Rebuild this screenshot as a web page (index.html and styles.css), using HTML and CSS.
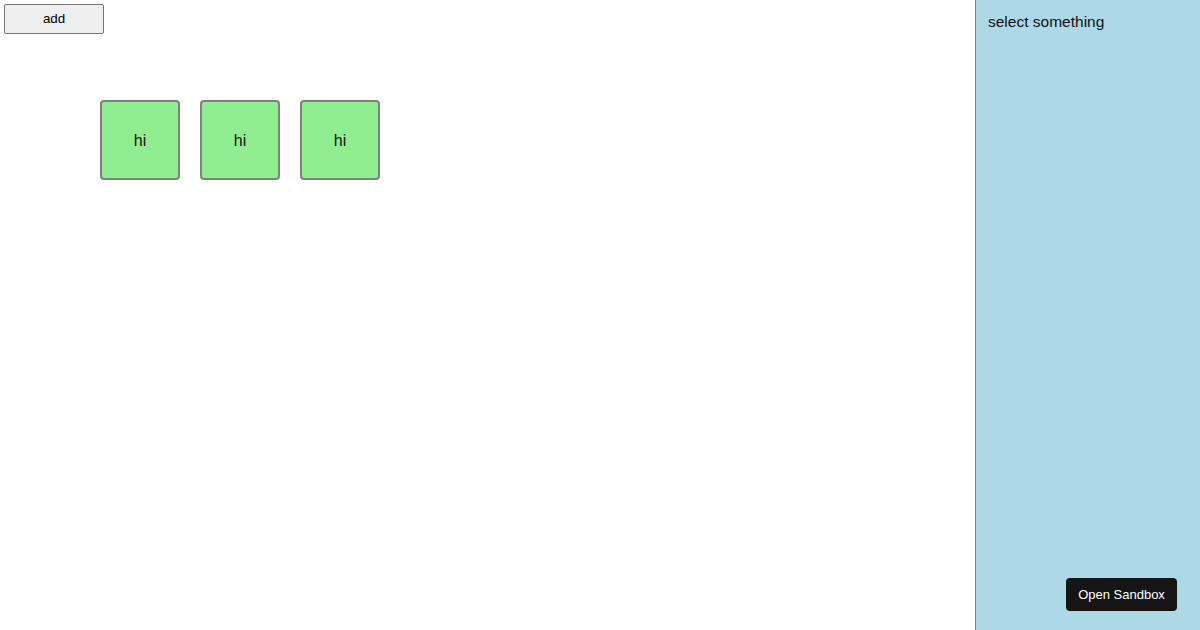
FILE: index.html
```html
<!DOCTYPE html>
<html>
<head>
<meta charset="utf-8">
<link rel="stylesheet" href="styles.css">
</head>
<body>
<div class="app">
  <main class="canvas">
    <button class="add-btn">add</button>
    <div class="nodes">
      <div class="node">hi</div>
      <div class="node">hi</div>
      <div class="node">hi</div>
    </div>
  </main>
  <aside class="panel">select something</aside>
</div>
<a class="sandbox-btn">Open Sandbox</a>
</body>
</html>
```
FILE: styles.css
```css
html, body {
  margin: 0;
  padding: 0;
  height: 100%;
  font-family: "Liberation Sans", Arial, sans-serif;
  color: #111;
}
.app {
  display: flex;
  height: 630px;
}
.canvas {
  flex: 1;
  padding: 4px;
  background: #fff;
}
.add-btn {
  display: block;
  width: 100px;
  height: 30px;
  font-family: "Liberation Sans", Arial, sans-serif;
  font-size: 13.33px;
  color: #000;
  background: #efefef;
  border: 1px solid #767676;
  border-radius: 2px;
  padding: 0 0 2px;
}
.nodes {
  display: flex;
  gap: 20px;
  margin: 66px 0 0 96px;
}
.node {
  width: 80px;
  height: 80px;
  box-sizing: border-box;
  border: 2px solid #808080;
  border-radius: 4px;
  background: #90ee90;
  display: flex;
  align-items: center;
  justify-content: center;
  font-size: 16px;
  padding-top: 2px;
}
.panel {
  border-left: 1px solid #808080;
  background: #add8e6;
  padding: 13px 12px;
  box-sizing: border-box;
  width: 225px;
  font-size: 15.5px;
}
.sandbox-btn {
  position: fixed;
  right: 23px;
  bottom: 19px;
  width: 111px;
  height: 33px;
  box-sizing: border-box;
  display: flex;
  align-items: center;
  justify-content: center;
  background: #151515;
  color: #fff;
  border-radius: 4px;
  font-size: 13px;
  font-family: "Liberation Sans", Arial, sans-serif;
}
```
